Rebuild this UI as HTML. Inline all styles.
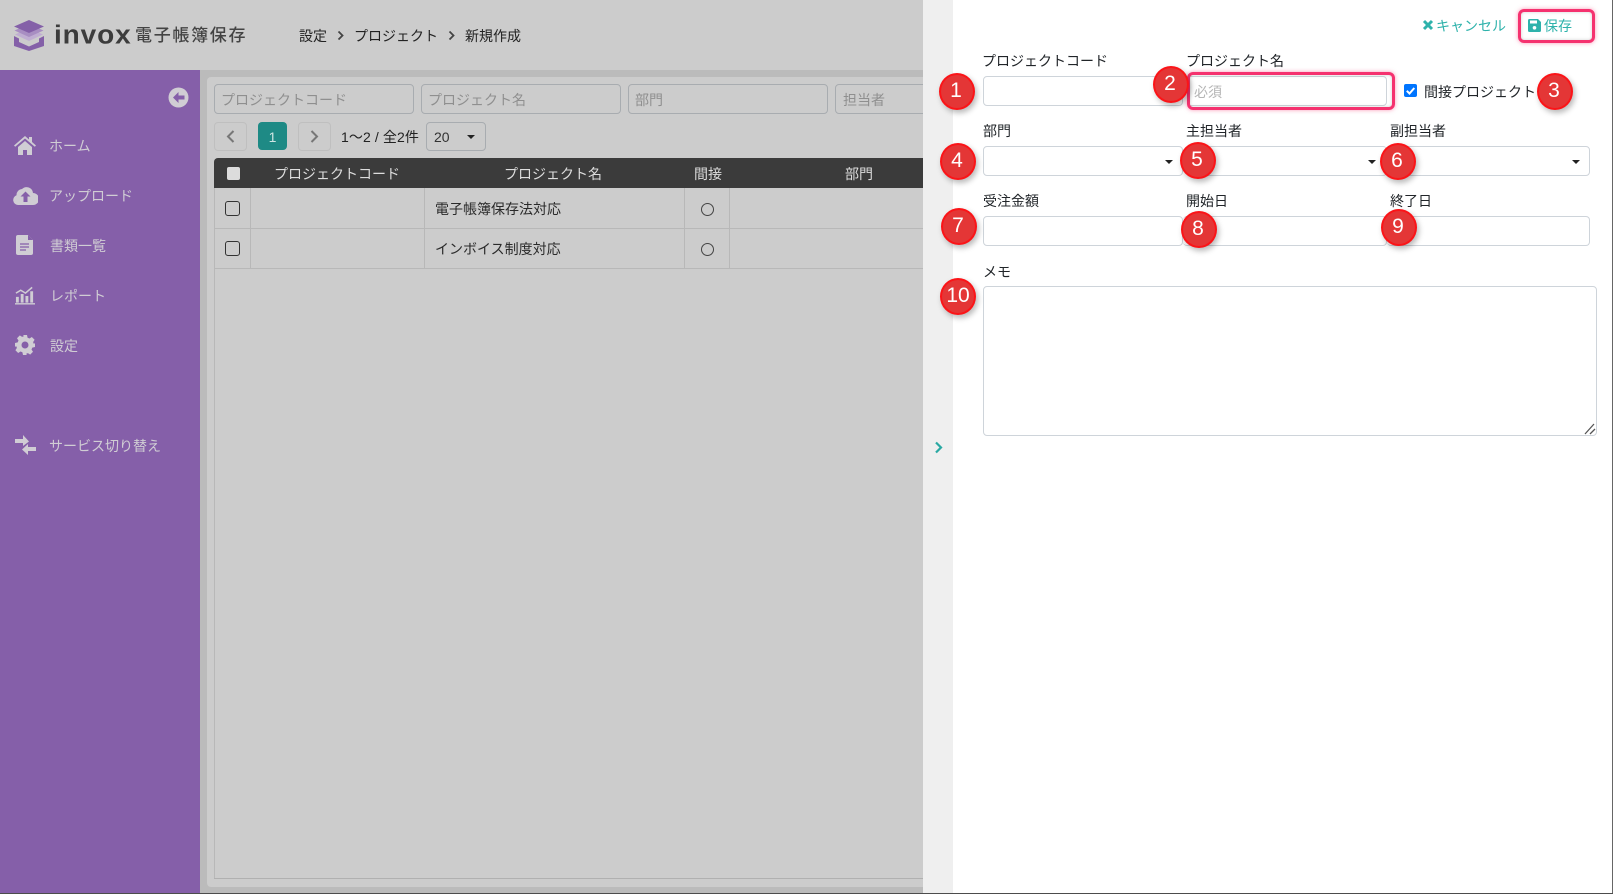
<!DOCTYPE html>
<html lang="ja"><head><meta charset="utf-8"><title>invox</title>
<style>
html,body{margin:0;padding:0}
body{width:1613px;height:894px;overflow:hidden;position:relative;background:#ccc;font-family:"Liberation Sans","Noto Sans CJK JP",sans-serif;font-size:14px;color:#222}
.a,.t{position:absolute}
.t{white-space:nowrap;line-height:20px;height:20px}
.box{position:absolute;box-sizing:border-box;border:1px solid #ced4da;border-radius:4px;background:#fff}
.fbox{position:absolute;box-sizing:border-box;border:1px solid #a8acb0;border-radius:4px;height:30px;top:84px;width:199.5px}
.nav{color:#d0cdd4}
.lbl{color:#212529}
.b{position:absolute;box-sizing:border-box;width:36px;height:37px;border-radius:50%;background:#e43636;border:2px solid #fb1418;box-shadow:2px 3px 6px rgba(0,0,0,.28);color:#fff;font-size:21px;line-height:32px;text-align:center;padding-right:2px}
.c{position:absolute;width:0;height:0;border-left:4px solid transparent;border-right:4px solid transparent;border-top:4px solid #222}
.pk{position:absolute;box-sizing:border-box;border:3px solid #f5326f;border-radius:6px;box-shadow:0 0 4px rgba(245,50,111,.5),inset 0 0 3px rgba(120,120,120,.35)}
.cb{position:absolute;box-sizing:border-box;width:15px;height:15px;border:1px solid #333;border-radius:3px}
.rd{position:absolute;box-sizing:border-box;width:13px;height:13px;border:1px solid #444;border-radius:50%}
.vl{position:absolute;width:1px;background:#b8b8b8;top:188px;height:80px}
</style></head><body>

<!-- main strip -->
<div class="a" style="left:200px;top:70px;width:723px;height:824px;background:#bbb"></div>
<div class="a" style="left:207px;top:77px;width:716px;height:810px;background:#ccc;border-radius:4px 0 0 4px"></div>

<!-- logo -->
<svg class="a" style="left:14px;top:20px" width="30" height="31" viewBox="0 0 30 31">
<path d="M0 16l5 2.500V22l10 4.500L25 22v-3.500l5-2.500v10l-15 5-15-5z" fill="#8460a8"/>
<path d="M15 8l14 6.500-14 6.500-14-6.500z" fill="#c0aed2"/>
<path d="M15 4l14.500 6.500L15 17 .5 10.500z" fill="#a88ec2"/>
<path d="M15 0l15 6.500L15 13 0 6.500z" fill="#8460a8"/>
</svg>
<div class="t" style="left:54px;top:21px;height:28px;line-height:28px;font-size:28px;font-weight:bold;letter-spacing:.9px;color:#3c3c3c;transform:scaleY(.92)">invox</div>
<div class="t" style="left:135px;top:25px;line-height:22px;height:22px;font-size:17px;letter-spacing:1.7px;color:#444;font-weight:500">電子帳簿保存</div>

<div class="t" style="left:299px;top:26px;color:#222">設定</div>
<svg class="a" style="left:337px;top:30px" width="7" height="11" viewBox="0 0 7 11"><path d="M1.500 1.500l4 4-4 4" fill="none" stroke="#444" stroke-width="1.800"/></svg>
<div class="t" style="left:354px;top:26px;color:#222">プロジェクト</div>
<svg class="a" style="left:448px;top:30px" width="7" height="11" viewBox="0 0 7 11"><path d="M1.500 1.500l4 4-4 4" fill="none" stroke="#444" stroke-width="1.800"/></svg>
<div class="t" style="left:465px;top:26px;color:#222">新規作成</div>

<!-- sidebar -->
<div class="a" style="left:0;top:70px;width:200px;height:824px;background:#855fa9"></div>
<svg class="a" style="left:168px;top:87px" width="21" height="21" viewBox="0 0 21 21"><circle cx="10.500" cy="10.500" r="10" fill="#d0cdd4"/><path d="M10.500 5L5 10.500 10.500 16v-3.500h6v-4h-6z" fill="#855fa9"/></svg>

<svg class="a" style="left:14px;top:135px" width="22" height="20" viewBox="0 0 22 20"><path d="M0 10.500L11 1l4 3.500V2h3v5l4 3.500-1.200 1.300L11 3.500 1.200 11.800z M4 12l7-6 7 6v8h-5v-5H9v5H4z" fill="#d0cdd4"/></svg>
<div class="t nav" style="left:49px;top:136px">ホーム</div>

<svg class="a" style="left:13px;top:186px" width="25" height="19" viewBox="0 0 25 19"><path d="M5 19a5 5 0 0 1-1.500-9.700A6 6 0 0 1 9 3 6.500 6.500 0 0 1 20 7a5 5 0 0 1 0 12z" fill="#d0cdd4"/><path d="M12.500 5.500l-5 5h3V16h4v-5.500h3z" fill="#855fa9"/></svg>
<div class="t nav" style="left:49px;top:186px">アップロード</div>

<svg class="a" style="left:16px;top:235px" width="18" height="20" viewBox="0 0 18 20"><path d="M2 0h10l5 5v13a2 2 0 0 1-2 2H2a2 2 0 0 1-2-2V2a2 2 0 0 1 2-2z" fill="#d0cdd4"/><path d="M12 0l5 5h-5z" fill="#855fa9"/><path d="M4 9h9M4 12h9M4 15h6" stroke="#855fa9" stroke-width="1.200"/></svg>
<div class="t nav" style="left:50px;top:236px">書類一覧</div>

<svg class="a" style="left:15px;top:285px" width="20" height="20" viewBox="0 0 21 20"><path d="M0 20h21v-1.500H0z M1 18v-6h3v6z M6 18v-9h3v9z M11 18v-7h3v7z M16 18V6h3v12z" fill="#d0cdd4"/><path d="M1 8l5-3 5 3 7-6" fill="none" stroke="#d0cdd4" stroke-width="1.600"/></svg>
<div class="t nav" style="left:50px;top:286px">レポート</div>

<svg class="a" style="left:15px;top:335px" width="20" height="20" viewBox="0 0 20 20"><path d="M8 0h4l.6 2.700 1.900.8 2.300-1.500 2.800 2.800-1.500 2.300.8 1.900L20 8v4l-2.700.6-.8 1.900 1.500 2.300-2.800 2.800-2.300-1.500-1.900.8L12 20H8l-.6-2.700-1.900-.8-2.300 1.500-2.800-2.800 1.500-2.300-.8-1.900L0 12V8l2.700-.6.800-1.900L2 3.200 4.800.4l2.300 1.500 1.900-.8zM10 6.500a3.500 3.500 0 1 0 0 7 3.500 3.500 0 0 0 0-7z" fill="#d0cdd4" fill-rule="evenodd"/></svg>
<div class="t nav" style="left:50px;top:336px">設定</div>

<svg class="a" style="left:15px;top:435px" width="21" height="20" viewBox="0 0 21 20"><path d="M0 4h8V0l6 6.500L8 11V8H0z M21 12h-8V9l-6 5.500 6 5.500v-4h8z" fill="#d0cdd4"/></svg>
<div class="t nav" style="left:49px;top:436px">サービス切り替え</div>

<!-- filters -->
<div class="fbox" style="left:214px"></div>
<div class="t" style="left:221px;top:90px;color:#8f8f8f">プロジェクトコード</div>
<div class="fbox" style="left:421px"></div>
<div class="t" style="left:428px;top:90px;color:#8f8f8f">プロジェクト名</div>
<div class="fbox" style="left:628px"></div>
<div class="t" style="left:635px;top:90px;color:#8f8f8f">部門</div>
<div class="fbox" style="left:835px;width:100px"></div>
<div class="t" style="left:843px;top:90px;color:#8f8f8f">担当者</div>

<!-- pagination -->
<div class="a" style="box-sizing:border-box;left:214px;top:122px;width:33px;height:29px;border:1px solid #bfbfbf;border-radius:4px"></div>
<svg class="a" style="left:226px;top:130px" width="9" height="13" viewBox="0 0 9 13"><path d="M7.500 1L2 6.500 7.500 12" fill="none" stroke="#777" stroke-width="2"/></svg>
<div class="a" style="left:258px;top:122px;width:29px;height:28px;background:#1e8a85;border-radius:4px;color:#cfe5e3;text-align:center;line-height:30px">1</div>
<div class="a" style="box-sizing:border-box;left:298px;top:122px;width:33px;height:29px;border:1px solid #bfbfbf;border-radius:4px"></div>
<svg class="a" style="left:310px;top:130px" width="9" height="13" viewBox="0 0 9 13"><path d="M1.500 1L7 6.500 1.500 12" fill="none" stroke="#777" stroke-width="2"/></svg>
<div class="t" style="left:341px;top:127px;color:#222;letter-spacing:.1px">1〜2 / 全2件</div>
<div class="a" style="box-sizing:border-box;left:426px;top:122px;width:60px;height:29px;border:1px solid #a8acb0;border-radius:4px"></div>
<div class="t" style="left:434px;top:127px;color:#333">20</div>
<div class="c" style="left:467px;top:135px"></div>

<!-- table -->
<div class="a" style="left:214px;top:158px;width:709px;height:30px;background:#3b3b3b;border-radius:4px 0 0 0"></div>
<div class="a" style="left:227px;top:167px;width:13px;height:13px;background:#dcdcdc;border-radius:2px"></div>
<div class="t" style="left:274px;top:164px;color:#ddd">プロジェクトコード</div>
<div class="t" style="left:504px;top:164px;color:#ddd">プロジェクト名</div>
<div class="t" style="left:694px;top:164px;color:#ddd">間接</div>
<div class="t" style="left:845px;top:164px;color:#ddd">部門</div>

<div class="a" style="left:214px;top:188px;width:1px;height:690px;background:#b8b8b8"></div>
<div class="a" style="left:214px;top:878px;width:709px;height:1px;background:#b0b0b0"></div>
<div class="a" style="left:214px;top:228px;width:709px;height:1px;background:#b8b8b8"></div>
<div class="a" style="left:214px;top:268px;width:709px;height:1px;background:#b8b8b8"></div>
<div class="vl" style="left:250px"></div>
<div class="vl" style="left:424px"></div>
<div class="vl" style="left:684px"></div>
<div class="vl" style="left:729px"></div>

<div class="cb" style="left:225px;top:201px"></div>
<div class="cb" style="left:225px;top:241px"></div>
<div class="t" style="left:435px;top:199px;color:#2a2a2a">電子帳簿保存法対応</div>
<div class="t" style="left:435px;top:239px;color:#2a2a2a">インボイス制度対応</div>
<div class="rd" style="left:700.5px;top:203px"></div>
<div class="rd" style="left:700.5px;top:243px"></div>

<!-- panel -->
<div class="a" style="left:923px;top:0;width:30px;height:894px;background:#efefef"></div>
<div class="a" style="left:953px;top:0;width:660px;height:894px;background:#fff"></div>
<svg class="a" style="left:934px;top:441px" width="9" height="13" viewBox="0 0 9 13"><path d="M2 1.500L7 6.500 2 11.500" fill="none" stroke="#2aa9a3" stroke-width="2.200"/></svg>

<svg class="a" style="left:1422px;top:19px" width="12" height="12" viewBox="0 0 12 12"><path d="M2 2l8 8M10 2l-8 8" stroke="#2eb2ab" stroke-width="3"/></svg>
<div class="t" style="left:1436px;top:16px;color:#2eb2ab">キャンセル</div>
<svg class="a" style="left:1528px;top:19px" width="13" height="13" viewBox="0 0 13 13"><path d="M1.500 0H10l3 3v8.500a1.500 1.500 0 0 1-1.500 1.500h-10A1.500 1.500 0 0 1 0 11.500v-10A1.500 1.500 0 0 1 1.500 0z" fill="#2eb2ab"/><rect x="2" y="1.500" width="7" height="3" fill="#fff"/><circle cx="6.500" cy="8.800" r="1.800" fill="#fff"/></svg>
<div class="t" style="left:1544px;top:16px;color:#2eb2ab">保存</div>
<div class="pk" style="left:1518px;top:9px;width:77px;height:34px;border-width:3.500px"></div>

<div class="t lbl" style="left:982px;top:51px">プロジェクトコード</div>
<div class="t lbl" style="left:1186px;top:51px">プロジェクト名</div>
<div class="box" style="left:983px;top:76px;width:200px;height:30px"></div>
<div class="box" style="left:1187px;top:76px;width:200px;height:30px"></div>
<div class="t" style="left:1194px;top:82px;color:#b5b5b5">必須</div>
<div class="pk" style="left:1187px;top:72px;width:208px;height:38px;border-width:3.500px"></div>

<div class="a" style="box-sizing:border-box;left:1404px;top:84px;width:13px;height:13px;background:#0075ff;border-radius:2px"></div>
<svg class="a" style="left:1404px;top:84px" width="13" height="13" viewBox="0 0 13 13"><path d="M2.800 6.800l2.700 2.700 4.800-5.500" fill="none" stroke="#fff" stroke-width="2"/></svg>
<div class="t lbl" style="left:1424px;top:82px">間接プロジェクト</div>

<div class="t lbl" style="left:983px;top:121px">部門</div>
<div class="t lbl" style="left:1186px;top:121px">主担当者</div>
<div class="t lbl" style="left:1390px;top:121px">副担当者</div>
<div class="box" style="left:983px;top:146px;width:200px;height:30px"></div>
<div class="box" style="left:1187px;top:146px;width:200px;height:30px;border-left:0;border-right:0"></div>
<div class="box" style="left:1390px;top:146px;width:200px;height:30px"></div>
<div class="c" style="left:1165px;top:160px"></div>
<div class="c" style="left:1368px;top:160px"></div>
<div class="c" style="left:1572px;top:160px"></div>

<div class="t lbl" style="left:983px;top:191px">受注金額</div>
<div class="t lbl" style="left:1186px;top:191px">開始日</div>
<div class="t lbl" style="left:1390px;top:191px">終了日</div>
<div class="box" style="left:983px;top:216px;width:200px;height:30px"></div>
<div class="box" style="left:1183px;top:216px;width:204px;height:30px;border-left:0"></div>
<div class="box" style="left:1387px;top:216px;width:203px;height:30px;border-left:0"></div>

<div class="t lbl" style="left:983px;top:262px">メモ</div>
<div class="box" style="left:983px;top:286px;width:614px;height:150px"></div>
<svg class="a" style="left:1584px;top:423px" width="12" height="12" viewBox="0 0 12 12"><path d="M1 11L10 1M6 11l5-5" stroke="#555" stroke-width="1.300"/></svg>

<!-- badges -->
<div class="b" style="left:939px;top:73px">1</div>
<div class="b" style="left:1153px;top:66px">2</div>
<div class="b" style="left:1537px;top:73px">3</div>
<div class="b" style="left:940px;top:143px">4</div>
<div class="b" style="left:1180px;top:142px">5</div>
<div class="b" style="left:1380px;top:143px">6</div>
<div class="b" style="left:941px;top:208px">7</div>
<div class="b" style="left:1181px;top:211px">8</div>
<div class="b" style="left:1381px;top:209px">9</div>
<div class="b" style="left:940px;top:278px;padding-right:0">10</div>

<!-- screen edge -->
<div class="a" style="left:1612px;top:0;width:1px;height:894px;background:#666"></div>
<div class="a" style="left:0;top:893px;width:1613px;height:1px;background:#4c4c4c"></div>
</body></html>
